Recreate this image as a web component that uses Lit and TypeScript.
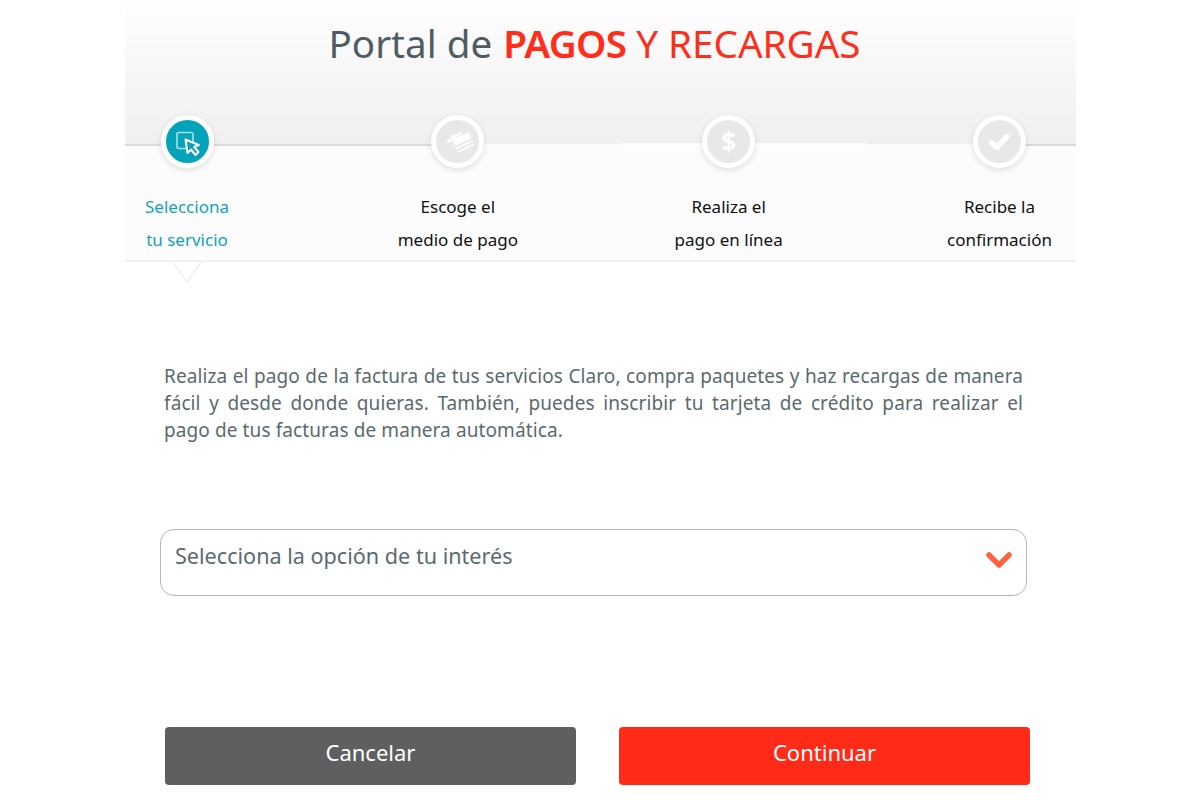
import { LitElement, html, css, svg } from "lit";
import { customElement } from "lit/decorators.js";

const FONT = css`"Noto Sans", "Open Sans", sans-serif`;

const cursorIcon = svg`<svg class="icon" viewBox="0 0 42 42" width="42" height="42">
  <rect x="11" y="11.5" width="16" height="16" rx="2" fill="none" stroke="#a9e0e7" stroke-width="1.6"/>
  <path d="M19.5 18.5 L21.5 32 L25 28.5 L29.5 34 L32.5 31 L28.2 26 L32.8 24 Z" fill="#0aa3b9" stroke="#fff" stroke-width="2" stroke-linejoin="round"/>
</svg>`;
const cardIcon = svg`<svg class="icon" viewBox="0 0 42 42" width="42" height="42">
  <g fill="#fff">
    <path d="M14 14.5 L24 11 L25 13 L15 18 Z" opacity=".85"/>
    <path d="M9 19.5 L14 16.5 L16 20.5 L11 22 Z" opacity=".9"/>
    <path d="M15.5 18 L32 11 L34.6 17.4 L18 24.8 Z"/>
    <path d="M18.8 26.4 L35.3 19 L36 20.8 L19.6 28.2 Z"/>
    <path d="M20.2 30 L36.6 22.6 L37.3 24.2 L21 31.8 Z" opacity=".9"/>
  </g>
</svg>`;
const checkIcon = svg`<svg class="icon" viewBox="0 0 42 42" width="42" height="42">
  <path d="M13.5 21.5 L19 26.5 L29 15.5" fill="none" stroke="#fff" stroke-width="5.4" stroke-linecap="round" stroke-linejoin="round"/>
</svg>`;

@customElement("app-root")
export class AppRoot extends LitElement {
  static styles = css`
    :host {
      display: block;
      width: 1200px;
      height: 800px;
      overflow: hidden;
      background: #fff;
      font-family: ${FONT};
      box-sizing: border-box;
      padding: 0 124px 0 125px;
    }
    .panel {
      height: 262px;
      box-sizing: border-box;
      border-bottom: 2px solid #f1f1f1;
      background:
        linear-gradient(#fff, #fff) no-repeat 495px 143px / 245px 3px,
        linear-gradient(to right, #dcdcdc 0, #dcdcdc 310px, #fdfdfd 340px, #fdfdfd 880px, #d9d9d9 900px) no-repeat 0 144px / 100% 2px,
        linear-gradient(#fefefe 0, #f4f4f4 100px, #f0f0f0 145px, #fcfcfc 145px) no-repeat 0 0 / 100% 100%;
    }
    h1 {
      margin: 0;
      height: 85px;
      display: flex;
      align-items: center;
      justify-content: center;
      gap: 11px;
      font-size: 38.6px;
      font-weight: 400;
      color: #4f5c63;
      padding-right: 12px;
    }
    h1 .red { color: #ff2d1a; }
    h1 b { font-weight: 600; letter-spacing: -0.7px; }
    .steps {
      display: flex;
      justify-content: space-between;
      padding-right: 14.5px;
      padding-top: 30px;
    }
    .step {
      width: 124px;
      display: flex;
      flex-direction: column;
      align-items: center;
    }
    .circle {
      width: 53px;
      height: 53px;
      box-sizing: border-box;
      border: 5px solid #fff;
      border-radius: 50%;
      background: #e8e8e8;
      box-shadow: 0 2px 6px rgba(0, 0, 0, 0.12);
      display: flex;
      align-items: center;
      justify-content: center;
      color: #fff;
      font-size: 26px;
      font-weight: 700;
      overflow: hidden;
    }
    .step.active .circle { background: #05a3b9; }
    .icon { flex: none; display: block; }
    .label {
      margin-top: 22px;
      font-size: 17px;
      line-height: 33px;
      text-align: center;
      white-space: nowrap;
      color: #111;
    }
    .step.active .label { color: #12a3b8; }
    .caret { display: block; margin-left: 47px; }
    .content {
      padding: 0 0 0 35px;
      width: 876px;
    }
    p {
      margin: 80px 0 0 4px;
      width: 859px;
      font-size: 19px;
      letter-spacing: 0.1px;
      line-height: 27px;
      color: #5b6a6e;
      text-align: justify;
    }
    .select {
      margin-top: 85px;
      width: 867px;
      height: 67px;
      box-sizing: border-box;
      border: 1px solid #b6b6b6;
      border-radius: 14px;
      padding: 10px 14px 0 14px;
      display: flex;
      justify-content: space-between;
      color: #5b6a6e;
      font-size: 21.6px;
      line-height: 32px;
    }
    .chev { margin-top: 11px; }
    .actions {
      margin: 131px 0 0 5px;
      width: 865px;
      display: flex;
      justify-content: space-between;
    }
    button {
      width: 411px;
      height: 58px;
      border: 0;
      border-radius: 4px;
      font-family: inherit;
      font-size: 22px;
      color: #fff;
      padding: 0 0 8px;
    }
    .cancel { background: #5f5f5f; }
    .go { background: #ff2a17; }
  `;

  private step(lines: [string, string], icon: unknown, active = false) {
    return html`<div class="step ${active ? "active" : ""}">
      <div class="circle">${icon}</div>
      <div class="label">${lines[0]}<br />${lines[1]}</div>
    </div>`;
  }

  render() {
    return html`
      <div class="panel">
        <h1><span>Portal de</span><span class="red"><b>PAGOS</b> Y RECARGAS</span></h1>
        <div class="steps">
          ${this.step(["Selecciona", "tu servicio"], cursorIcon, true)}
          ${this.step(["Escoge el", "medio de pago"], cardIcon)}
          ${this.step(["Realiza el", "pago en línea"], "$")}
          ${this.step(["Recibe la", "confirmación"], checkIcon)}
        </div>
      </div>
      <svg class="caret" width="30" height="21" viewBox="0 0 30 21">
        <path d="M1 0 L15 20 L29 0" fill="#fff" stroke="#f0f0f0" stroke-width="1.5"/>
      </svg>
      <div class="content">
        <p>Realiza el pago de la factura de tus servicios Claro, compra paquetes y haz recargas de manera fácil y desde donde quieras. También, puedes inscribir tu tarjeta de crédito para realizar el pago de tus facturas de manera automática.</p>
        <div class="select">
          <span>Selecciona la opción de tu interés</span>
          <svg class="chev" width="26" height="18" viewBox="0 0 26 18">
            <path d="M3 4 L13 14 L23 4" fill="none" stroke="#ff6340" stroke-width="5.5" stroke-linecap="round" stroke-linejoin="round"/>
          </svg>
        </div>
        <div class="actions">
          <button class="cancel">Cancelar</button>
          <button class="go">Continuar</button>
        </div>
      </div>
    `;
  }
}
